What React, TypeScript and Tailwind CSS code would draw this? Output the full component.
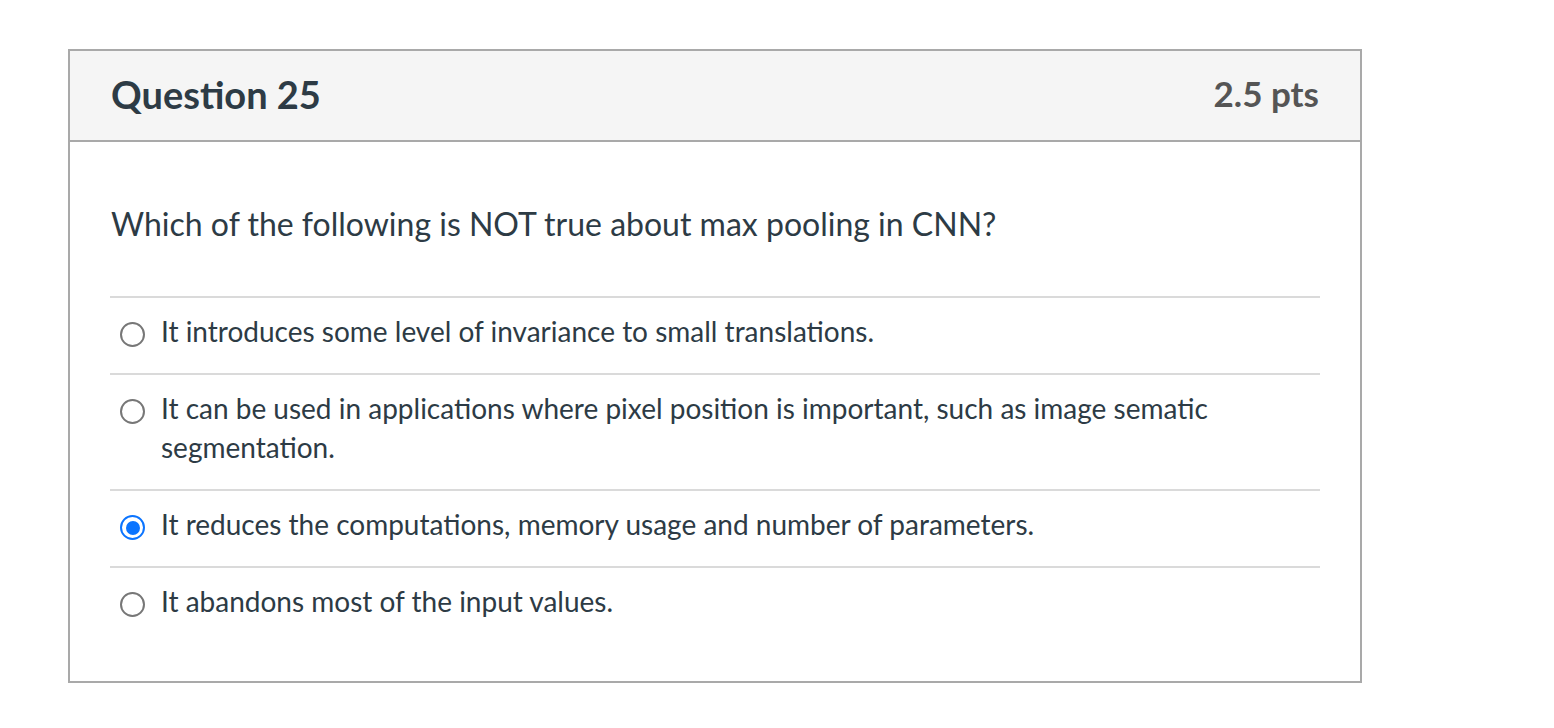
import { useState } from "react";

const answers = [
  "It introduces some level of invariance to small translations.",
  "It can be used in applications where pixel position is important, such as image sematic segmentation.",
  "It reduces the computations, memory usage and number of parameters.",
  "It abandons most of the input values.",
];

function Radio({ checked }: { checked: boolean }) {
  return checked ? (
    <span className="mt-[10px] flex h-[25px] w-[25px] shrink-0 items-center justify-center rounded-full border-[2.5px] border-[#0b74ff] bg-white">
      <span className="h-[14px] w-[14px] rounded-full bg-[#0b74ff]" />
    </span>
  ) : (
    <span className="mt-[10px] h-[25px] w-[25px] shrink-0 rounded-full border-2 border-[#777] bg-white" />
  );
}

export default function App() {
  const [selected, setSelected] = useState(2);

  return (
    <div className="min-h-screen bg-white pl-[68px] pt-[49px] font-['Lato','Liberation_Sans',sans-serif] text-[#2d3b45]">
      <div className="w-[1294px] border-2 border-[#a9a9a9]">
        <div className="flex h-[91px] items-center justify-between border-b-2 border-[#a9a9a9] bg-[#f5f5f5] px-[41px] pb-[4px]">
          <h2 className="text-[38px] font-bold leading-none">Question 25</h2>
          <span className="text-[35px] font-bold leading-none text-[#555]">2.5 pts</span>
        </div>

        <div className="px-[40px] pb-[38px] pt-[59px]">
          <p className="pl-px text-[32px] leading-[45px]">
            Which of the following is NOT true about max pooling in CNN?
          </p>

          <div className="mt-[50px]">
            {answers.map((a, i) => (
              <label
                key={i}
                onClick={() => setSelected(i)}
                className="flex cursor-pointer gap-[16px] border-t-2 border-[#dadada] pb-[22px] pl-[10px] pr-[100px] pt-[14px]"
              >
                <Radio checked={selected === i} />
                <span className="text-[28px] leading-[39px]">{a}</span>
              </label>
            ))}
          </div>
        </div>
      </div>
    </div>
  );
}
